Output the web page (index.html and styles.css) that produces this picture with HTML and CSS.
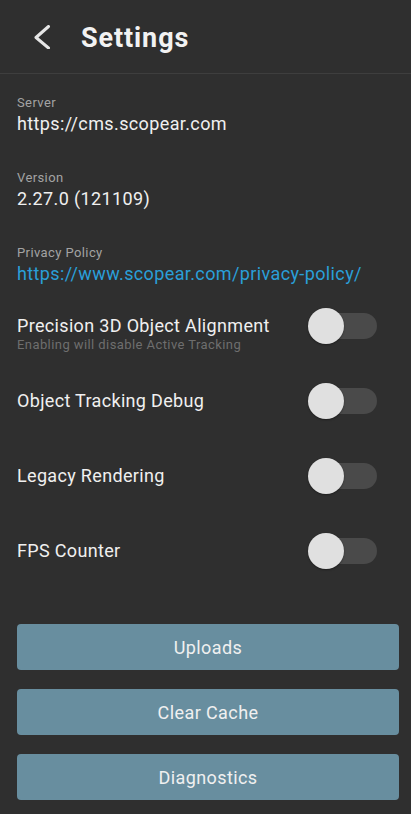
FILE: index.html
```html
<!DOCTYPE html>
<html lang="en">
<head>
<meta charset="utf-8">
<title>Settings</title>
<link rel="stylesheet" href="styles.css">
</head>
<body>
<header class="topbar">
  <svg class="back" width="18" height="24" viewBox="0 0 18 24" aria-hidden="true">
    <polyline points="15.5,1.5 3,12.5 15.5,23" fill="none" stroke="#e6e6e6" stroke-width="3" stroke-linecap="round" stroke-linejoin="round"/>
  </svg>
  <h1 class="title">Settings</h1>
</header>
<main class="content">
  <section class="info">
    <div class="info-item">
      <div class="label">Server</div>
      <div class="value">https://cms.scopear.com</div>
    </div>
    <div class="info-item">
      <div class="label">Version</div>
      <div class="value">2.27.0 (121109)</div>
    </div>
    <div class="info-item">
      <div class="label">Privacy Policy</div>
      <div class="value link">https://www.scopear.com/privacy-policy/</div>
    </div>
  </section>
  <section class="toggles">
    <div class="toggle-row">
      <div class="toggle-text">
        <div class="toggle-title">Precision 3D Object Alignment</div>
        <div class="toggle-sub">Enabling will disable Active Tracking</div>
      </div>
      <div class="switch"><span class="track"></span><span class="thumb"></span></div>
    </div>
    <div class="toggle-row">
      <div class="toggle-text">
        <div class="toggle-title">Object Tracking Debug</div>
      </div>
      <div class="switch"><span class="track"></span><span class="thumb"></span></div>
    </div>
    <div class="toggle-row">
      <div class="toggle-text">
        <div class="toggle-title">Legacy Rendering</div>
      </div>
      <div class="switch"><span class="track"></span><span class="thumb"></span></div>
    </div>
    <div class="toggle-row">
      <div class="toggle-text">
        <div class="toggle-title">FPS Counter</div>
      </div>
      <div class="switch"><span class="track"></span><span class="thumb"></span></div>
    </div>
  </section>
  <section class="actions">
    <button class="btn">Uploads</button>
    <button class="btn">Clear Cache</button>
    <button class="btn">Diagnostics</button>
  </section>
</main>
</body>
</html>
```
FILE: styles.css
```css
html, body {
  margin: 0;
  padding: 0;
  background: #2f2f2f;
  font-family: Roboto, "Noto Sans", sans-serif;
  color: #f0f0f0;
}
.topbar {
  height: 73px;
  border-bottom: 1px solid #3e3e3e;
  display: flex;
  align-items: center;
  padding-left: 33px;
}
.back {
  display: block;
  flex: none;
}
.title {
  margin: 2px 0 0 30px;
  font-size: 27px;
  font-weight: 700;
  line-height: 32px;
  letter-spacing: 0.9px;
  color: #f2f2f2;
}
.content {
  padding: 0 12px 0 17px;
}
.info {
  padding-top: 21px;
  display: flex;
  flex-direction: column;
  gap: 36px;
}
.label {
  font-size: 13px;
  line-height: 16px;
  letter-spacing: 0.4px;
  color: #a3a3a3;
}
.value {
  margin-top: 3px;
  font-size: 18px;
  line-height: 20px;
  letter-spacing: 0.38px;
  color: #f0f0f0;
}
.link {
  color: #2a9fd8;
}
.toggles {
  margin-top: 13px;
}
.toggle-row {
  height: 75px;
  box-sizing: border-box;
  padding: 19px 22px 0 0;
  display: flex;
  justify-content: space-between;
  align-items: flex-start;
}
.toggle-title {
  font-size: 18px;
  line-height: 20px;
  letter-spacing: 0.33px;
  color: #f0f0f0;
}
.toggle-sub {
  margin-top: 1px;
  font-size: 13px;
  line-height: 16px;
  letter-spacing: 0.42px;
  color: #6e6e6e;
}
.switch {
  position: relative;
  width: 69px;
  height: 36px;
  margin-top: -8px;
  flex: none;
}
.track {
  position: absolute;
  left: 3px;
  right: 0;
  top: 5px;
  height: 26px;
  border-radius: 13px;
  background: #4a4a4a;
}
.thumb {
  position: absolute;
  left: 0;
  top: 0;
  width: 36px;
  height: 36px;
  border-radius: 50%;
  background: #e0e0e0;
  box-shadow: 0 1px 2px rgba(0,0,0,0.35);
}
.actions {
  margin-top: 27px;
  display: flex;
  flex-direction: column;
  gap: 19px;
}
.btn {
  height: 46px;
  border: none;
  border-radius: 4px;
  background: #688e9f;
  color: #f0f0f0;
  font-family: Roboto, "Noto Sans", sans-serif;
  font-size: 18px;
  letter-spacing: 0.4px;
  padding: 0;
}
```
